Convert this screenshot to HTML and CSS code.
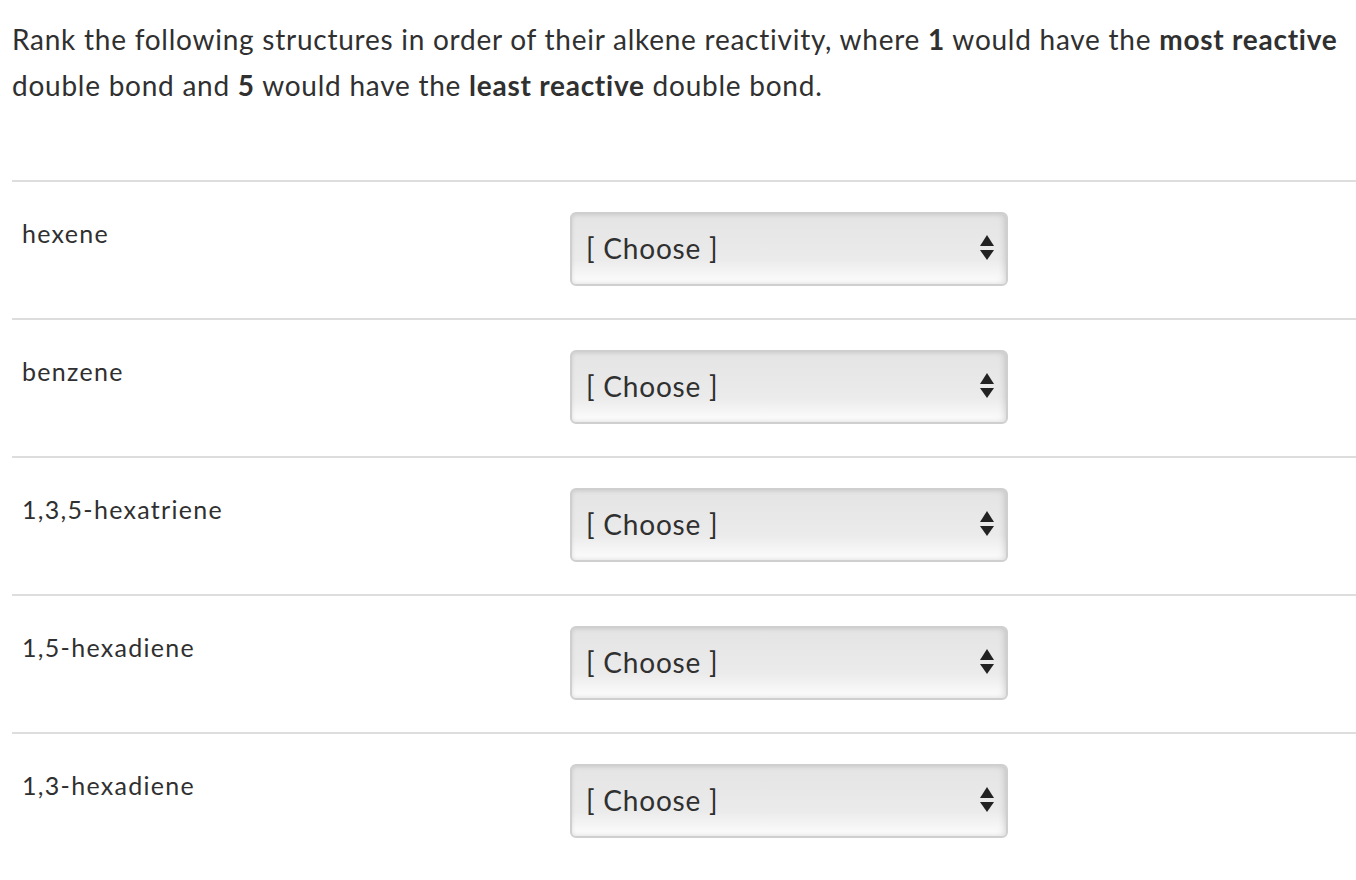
FILE: index.html
```html
<!DOCTYPE html>
<html lang="en">
<head>
<meta charset="utf-8">
<title>Rank alkene reactivity</title>
<link rel="stylesheet" href="styles.css">
</head>
<body>
<div class="quiz">
  <p class="question">Rank the following structures in order of their alkene reactivity, where <strong>1</strong> would have the <strong>most reactive</strong> double bond and <strong>5</strong> would have the <strong>least reactive</strong> double bond.</p>
  <div class="answers">
    <div class="row">
      <div class="label">hexene</div>
      <div class="select-wrap">
        <select class="select"><option>[ Choose ]</option><option>1</option><option>2</option><option>3</option><option>4</option><option>5</option></select>
        <svg class="arrows" width="14" height="26" viewBox="0 0 14 26"><polygon points="7,0 14,11 0,11" fill="#222"/><polygon points="0,15 14,15 7,25" fill="#222"/></svg>
      </div>
    </div>
    <div class="row">
      <div class="label">benzene</div>
      <div class="select-wrap">
        <select class="select"><option>[ Choose ]</option><option>1</option><option>2</option><option>3</option><option>4</option><option>5</option></select>
        <svg class="arrows" width="14" height="26" viewBox="0 0 14 26"><polygon points="7,0 14,11 0,11" fill="#222"/><polygon points="0,15 14,15 7,25" fill="#222"/></svg>
      </div>
    </div>
    <div class="row">
      <div class="label">1,3,5-hexatriene</div>
      <div class="select-wrap">
        <select class="select"><option>[ Choose ]</option><option>1</option><option>2</option><option>3</option><option>4</option><option>5</option></select>
        <svg class="arrows" width="14" height="26" viewBox="0 0 14 26"><polygon points="7,0 14,11 0,11" fill="#222"/><polygon points="0,15 14,15 7,25" fill="#222"/></svg>
      </div>
    </div>
    <div class="row">
      <div class="label">1,5-hexadiene</div>
      <div class="select-wrap">
        <select class="select"><option>[ Choose ]</option><option>1</option><option>2</option><option>3</option><option>4</option><option>5</option></select>
        <svg class="arrows" width="14" height="26" viewBox="0 0 14 26"><polygon points="7,0 14,11 0,11" fill="#222"/><polygon points="0,15 14,15 7,25" fill="#222"/></svg>
      </div>
    </div>
    <div class="row">
      <div class="label">1,3-hexadiene</div>
      <div class="select-wrap">
        <select class="select"><option>[ Choose ]</option><option>1</option><option>2</option><option>3</option><option>4</option><option>5</option></select>
        <svg class="arrows" width="14" height="26" viewBox="0 0 14 26"><polygon points="7,0 14,11 0,11" fill="#222"/><polygon points="0,15 14,15 7,25" fill="#222"/></svg>
      </div>
    </div>
  </div>
</div>
</body>
</html>
```
FILE: styles.css
```css
html, body {
  margin: 0;
  padding: 0;
  background: #fff;
}
body {
  font-family: Lato, "Liberation Sans", sans-serif;
  color: #303030;
}
.quiz {
  padding-left: 12px;
}
.question {
  margin: 16px 0 0 0;
  font-size: 28px;
  line-height: 46px;
  letter-spacing: 0.75px;
}
.question strong {
  font-weight: 700;
}
.answers {
  margin-top: 72px;
}
.row {
  display: flex;
  align-items: flex-start;
  border-top: 2px solid #ddd;
  padding: 30px 0 32px 10px;
}
.label {
  width: 548px;
  font-size: 25px;
  line-height: 30px;
  letter-spacing: 1.3px;
  padding-top: 6px;
}
.select-wrap {
  position: relative;
  width: 438px;
  height: 74px;
}
.select {
  appearance: none;
  -webkit-appearance: none;
  width: 100%;
  height: 100%;
  box-sizing: border-box;
  border: 2px solid #cfcfcf;
  border-radius: 6px;
  background: linear-gradient(to bottom, #e4e4e4 0%, #ebebeb 65%, #fdfdfd 100%);
  box-shadow: inset -3px 0 6px rgba(0, 0, 0, 0.08), inset 0 0 4px rgba(0, 0, 0, 0.08);
  font-family: Lato, "Liberation Sans", sans-serif;
  font-size: 28px;
  letter-spacing: 0.8px;
  color: #303030;
  padding: 0 40px 2px 14px;
  margin: 0;
}
.arrows {
  position: absolute;
  right: 14px;
  top: 23px;
  pointer-events: none;
}
```
